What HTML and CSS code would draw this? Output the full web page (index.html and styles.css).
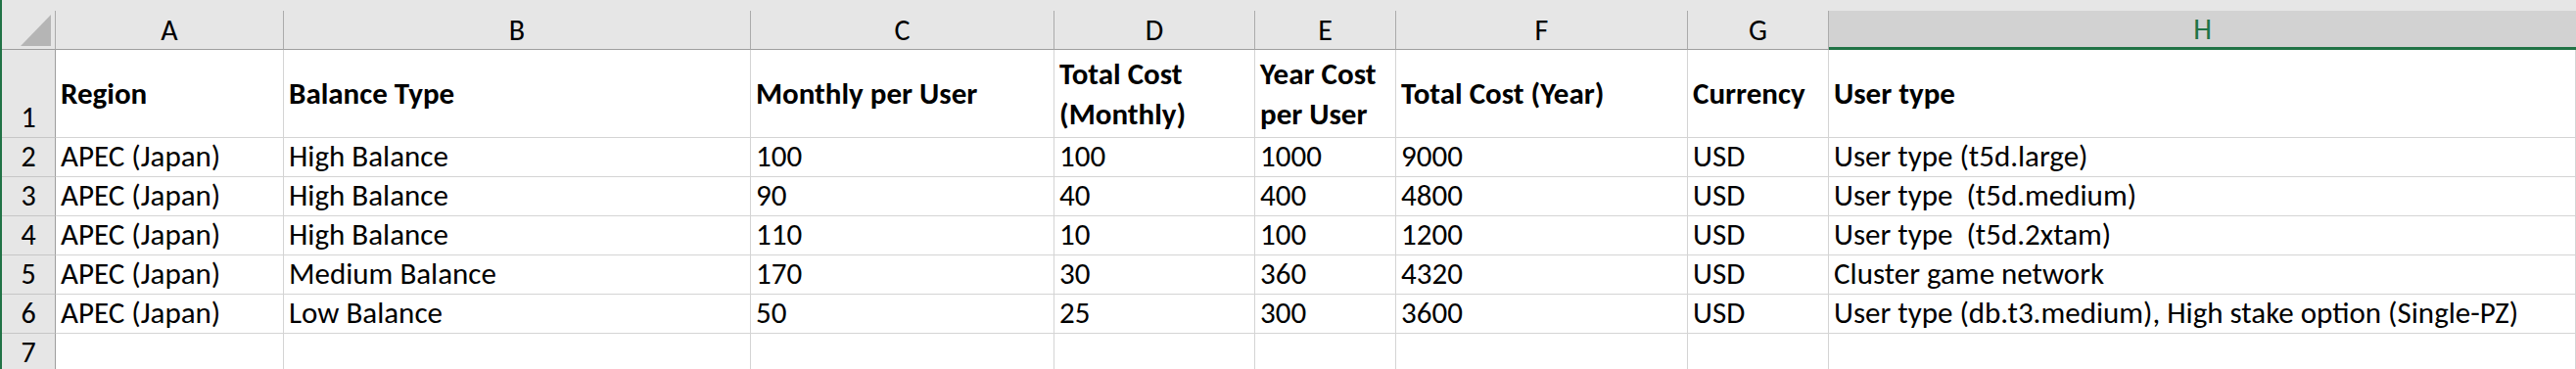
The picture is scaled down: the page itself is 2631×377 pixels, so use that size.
FILE: index.html
```html
<!DOCTYPE html>
<html>
<head>
    <meta charset="utf-8">
    <title>Sheet1</title>
    <link rel="stylesheet" href="styles.css">
</head>
<body>
    <div class="frame">
        <div class="topbar"></div>
        <div class="sheet">
            <div class="corner">
                <svg width="32" height="32" viewBox="0 0 32 32"><polygon points="31,0 31,32 0,32" fill="#b5b5b5"/></svg>
            </div>
            <div class="col-head">A</div>
            <div class="col-head">B</div>
            <div class="col-head">C</div>
            <div class="col-head">D</div>
            <div class="col-head">E</div>
            <div class="col-head">F</div>
            <div class="col-head">G</div>
            <div class="col-head active">H</div>

            <div class="row-head">1</div>
            <div class="cell title">Region</div>
            <div class="cell title">Balance Type</div>
            <div class="cell title">Monthly per User</div>
            <div class="cell title">Total Cost<br>(Monthly)</div>
            <div class="cell title">Year Cost<br>per User</div>
            <div class="cell title">Total Cost (Year)</div>
            <div class="cell title">Currency</div>
            <div class="cell title">User type</div>

            <div class="row-head">2</div>
            <div class="cell">APEC (Japan)</div>
            <div class="cell">High Balance</div>
            <div class="cell">100</div>
            <div class="cell">100</div>
            <div class="cell">1000</div>
            <div class="cell">9000</div>
            <div class="cell">USD</div>
            <div class="cell">User type (t5d.large)</div>

            <div class="row-head">3</div>
            <div class="cell">APEC (Japan)</div>
            <div class="cell">High Balance</div>
            <div class="cell">90</div>
            <div class="cell">40</div>
            <div class="cell">400</div>
            <div class="cell">4800</div>
            <div class="cell">USD</div>
            <div class="cell">User type  (t5d.medium)</div>

            <div class="row-head">4</div>
            <div class="cell">APEC (Japan)</div>
            <div class="cell">High Balance</div>
            <div class="cell">110</div>
            <div class="cell">10</div>
            <div class="cell">100</div>
            <div class="cell">1200</div>
            <div class="cell">USD</div>
            <div class="cell">User type  (t5d.2xtam)</div>

            <div class="row-head">5</div>
            <div class="cell">APEC (Japan)</div>
            <div class="cell">Medium Balance</div>
            <div class="cell">170</div>
            <div class="cell">30</div>
            <div class="cell">360</div>
            <div class="cell">4320</div>
            <div class="cell">USD</div>
            <div class="cell">Cluster game network</div>

            <div class="row-head">6</div>
            <div class="cell">APEC (Japan)</div>
            <div class="cell">Low Balance</div>
            <div class="cell">50</div>
            <div class="cell">25</div>
            <div class="cell">300</div>
            <div class="cell">3600</div>
            <div class="cell">USD</div>
            <div class="cell">User type (db.t3.medium), High stake option (Single-PZ)</div>

            <div class="row-head">7</div>
            <div class="cell"></div>
            <div class="cell"></div>
            <div class="cell"></div>
            <div class="cell"></div>
            <div class="cell"></div>
            <div class="cell"></div>
            <div class="cell"></div>
            <div class="cell"></div>
        </div>
    </div>
</body>
</html>
```
FILE: styles.css
```css
html, body {
    margin: 0;
    padding: 0;
    background-color: #fff;
    overflow: hidden;
}
body {
    font-family: Carlito, Lato, "Open Sans", sans-serif;
    font-size: 31px;
    color: #000;
}
.frame {
    border-left: 2px solid #217346;
    height: 377px;
    box-sizing: border-box;
}
.topbar {
    height: 11px;
    background-color: #e6e6e6;
}
.sheet {
    display: grid;
    grid-template-columns: 55px 233px 477px 310px 205px 144px 298px 144px 1fr;
    grid-template-rows: 40px 90px repeat(6, 40px);
}
.corner {
    background-color: #e6e6e6;
    border-right: 1px solid #ababab;
    border-bottom: 1px solid #9e9e9e;
    box-sizing: border-box;
    display: flex;
    align-items: flex-end;
    justify-content: flex-end;
    padding: 0 3px 3px 0;
}
.corner svg {
    display: block;
}
.col-head {
    background-color: #e6e6e6;
    border-right: 1px solid #ababab;
    border-bottom: 1px solid #9e9e9e;
    box-sizing: border-box;
    display: flex;
    align-items: center;
    justify-content: center;
    font-size: 30px;
    line-height: 1;
}
.col-head.active {
    background-color: #d2d2d2;
    color: #217346;
    border-right: none;
    border-bottom: 3px solid #217346;
}
.row-head {
    background-color: #e6e6e6;
    border-right: 1px solid #9e9e9e;
    border-bottom: 1px solid #c6c6c6;
    box-sizing: border-box;
    display: flex;
    align-items: flex-end;
    justify-content: center;
    font-size: 30px;
    line-height: 1;
    padding-bottom: 5px;
}
.cell {
    border-right: 1px solid #d4d4d4;
    border-bottom: 1px solid #d4d4d4;
    box-sizing: border-box;
    display: flex;
    align-items: flex-end;
    padding: 0 5px 5px 5px;
    line-height: 1;
    white-space: pre;
    overflow: visible;
}
.cell.title {
    font-weight: bold;
    align-items: center;
    padding-bottom: 0;
    line-height: 1.3;
}
```
